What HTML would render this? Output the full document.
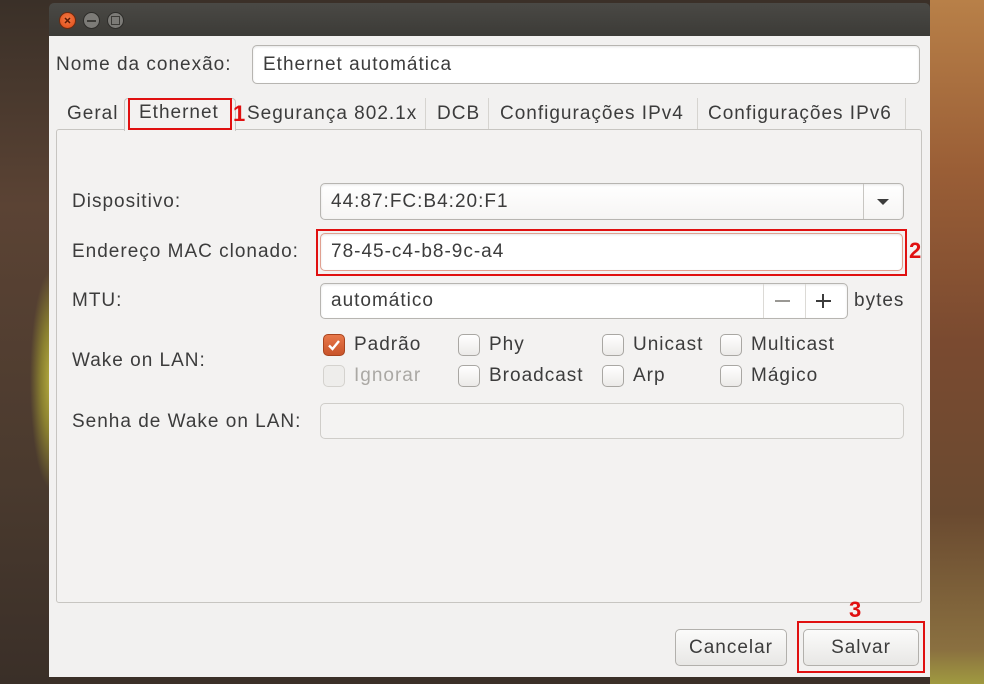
<!DOCTYPE html>
<html><head><meta charset="utf-8"><style>
*{margin:0;padding:0;box-sizing:border-box}
body{width:984px;height:684px;overflow:hidden;position:relative;font-family:"Liberation Sans",sans-serif;font-size:19px;letter-spacing:1px;color:#3c3c3c;
background:#3b3028}
.bgl{position:absolute;left:0;top:0;width:49px;height:684px;background:radial-gradient(ellipse 22px 110px at 52px 380px,#b9b040 0,#8a8030 50%,rgba(0,0,0,0) 100%),linear-gradient(180deg,#3a3028,#5b4334 30%,#4a3a2e 70%,#3a2f28)}
.bgr{position:absolute;left:930px;top:0;width:54px;height:684px;background:radial-gradient(ellipse 25px 50px at 984px 470px,#6a6a30,rgba(0,0,0,0)),radial-gradient(ellipse 20px 30px at 950px 115px,#e8c070,rgba(0,0,0,0)),linear-gradient(180deg,#b88048,#9a5e36 25%,#7a4a30 50%,#6a4a30 75%,#8a7040 95%,#a09a40)}
.a{position:absolute;white-space:nowrap}
.title{left:49px;top:3px;width:881px;height:33px;background:linear-gradient(#4a4945,#3c3b37);border-radius:5px 5px 0 0}
.wb{position:absolute;top:9px;width:17px;height:17px;border-radius:50%;background:#7c7b77;border:1px solid #2e2d2a}
.win{left:49px;top:36px;width:881px;height:641px;background:#f2f1f0}
.entry{position:absolute;background:#fff;border:1px solid #b7b5b1;border-radius:5px;box-shadow:inset 0 1px 2px rgba(0,0,0,.1)}
.t{font-size:19px;line-height:22px}
.red{position:absolute;border:2px solid #e01010}
.num{position:absolute;color:#e01010;font-weight:bold;font-size:22px;letter-spacing:0}
.cb{position:absolute;width:22px;height:22px;border:1px solid #a9a7a3;border-radius:5px;background:linear-gradient(#fff,#eceae8)}
.sep{position:absolute;top:98px;width:1px;height:31px;background:#d6d4d0}
.btn{position:absolute;border:1px solid #b2b0ac;border-radius:5px;background:linear-gradient(#fbfbfa,#e8e7e5);text-align:center;line-height:35px}
</style></head><body>
<div class="bgl"></div><div class="bgr"></div>
<div class="a title">
 <div class="wb" style="left:10px;background:radial-gradient(circle at 50% 40%,#f37a45,#df4a16);border-color:#6a2a10"></div>
 <svg style="position:absolute;left:14px;top:13px" width="9" height="9"><path d="M2 2L7 7M7 2L2 7" stroke="#5a1a05" stroke-width="1.5"/></svg>
 <div class="wb" style="left:34px"></div><div class="wb" style="left:58px"></div>
 <div style="position:absolute;left:38px;top:17px;width:9px;height:2px;background:#3c3b37"></div>
 <div style="position:absolute;left:62px;top:13px;width:9px;height:9px;border:1.5px solid #3c3b37"></div>
</div>
<div class="a win"></div>
<div class="a t" style="left:56px;top:54px">Nome da conexão:</div>
<div class="entry" style="left:252px;top:45px;width:668px;height:39px"></div>
<div class="a t" style="left:263px;top:54px">Ethernet automática</div>

<div class="a" style="left:56px;top:129px;width:866px;height:474px;border:1px solid #c7c5c1;border-radius:3px;background:#f3f2f1"></div>
<div class="a" style="left:124px;top:98px;width:112px;height:33px;background:#f3f2f1;border:1px solid #c7c5c1;border-bottom:none;border-radius:4px 4px 0 0"></div>
<div class="a t" style="left:67px;top:103px">Geral</div>
<div class="a t" style="left:139px;top:102px">Ethernet</div>
<div class="red" style="left:128px;top:98px;width:104px;height:32px"></div>
<div class="num" style="left:233px;top:101px">1</div>
<div class="a t" style="left:247px;top:103px">Segurança 802.1x</div>
<div class="sep" style="left:425px"></div>
<div class="a t" style="left:437px;top:103px">DCB</div>
<div class="sep" style="left:488px"></div>
<div class="a t" style="left:500px;top:103px">Configurações IPv4</div>
<div class="sep" style="left:697px"></div>
<div class="a t" style="left:708px;top:103px">Configurações IPv6</div>
<div class="sep" style="left:905px"></div>

<div class="a t" style="left:72px;top:191px">Dispositivo:</div>
<div class="a t" style="left:72px;top:241px">Endereço MAC clonado:</div>
<div class="a t" style="left:72px;top:290px">MTU:</div>
<div class="a t" style="left:72px;top:350px">Wake on LAN:</div>
<div class="a t" style="left:72px;top:411px">Senha de Wake on LAN:</div>

<div class="entry" style="left:320px;top:183px;width:584px;height:37px;background:linear-gradient(#fff,#f6f5f4)"></div>
<div class="a" style="left:863px;top:184px;width:1px;height:35px;background:#c8c6c2"></div>
<div class="a" style="left:877px;top:199px;width:0;height:0;border-left:6px solid transparent;border-right:6px solid transparent;border-top:6px solid #3c3c3c"></div>
<div class="a t" style="left:331px;top:191px">44:87:FC:B4:20:F1</div>

<div class="entry" style="left:320px;top:233px;width:583px;height:38px;border-color:#e0a090"></div>
<div class="red" style="left:316px;top:229px;width:591px;height:47px"></div>
<div class="num" style="left:909px;top:238px">2</div>
<div class="a t" style="left:331px;top:241px">78-45-c4-b8-9c-a4</div>

<div class="entry" style="left:320px;top:283px;width:528px;height:36px"></div>
<div class="a" style="left:763px;top:284px;width:1px;height:34px;background:#dcdad6"></div>
<div class="a" style="left:805px;top:284px;width:1px;height:34px;background:#dcdad6"></div>
<div class="a" style="left:775px;top:300px;width:15px;height:2px;background:#9a9894"></div>
<div class="a" style="left:816px;top:300px;width:15px;height:2px;background:#3c3c3c"></div>
<div class="a" style="left:822px;top:294px;width:2px;height:14px;background:#3c3c3c"></div>
<div class="a t" style="left:331px;top:290px">automático</div>
<div class="a t" style="left:854px;top:290px">bytes</div>

<div class="cb" style="left:323px;top:334px;background:linear-gradient(#e8784a,#c9542a);border-color:#a8441e"></div>
<svg class="a" style="left:326px;top:337px" width="16" height="16"><path d="M3 8.5 L6.5 12 L13 4" stroke="#fff" stroke-width="2.4" fill="none"/></svg>
<div class="a t" style="left:354px;top:334px">Padrão</div>
<div class="cb" style="left:458px;top:334px"></div><div class="a t" style="left:489px;top:334px">Phy</div>
<div class="cb" style="left:602px;top:334px"></div><div class="a t" style="left:633px;top:334px">Unicast</div>
<div class="cb" style="left:720px;top:334px"></div><div class="a t" style="left:751px;top:334px">Multicast</div>
<div class="cb" style="left:323px;top:365px;border-color:#d4d2ce;background:#eeedeb"></div><div class="a t" style="left:354px;top:365px;color:#aaa8a4">Ignorar</div>
<div class="cb" style="left:458px;top:365px"></div><div class="a t" style="left:489px;top:365px">Broadcast</div>
<div class="cb" style="left:602px;top:365px"></div><div class="a t" style="left:633px;top:365px">Arp</div>
<div class="cb" style="left:720px;top:365px"></div><div class="a t" style="left:751px;top:365px">Mágico</div>

<div class="entry" style="left:320px;top:403px;width:584px;height:36px;background:#f4f3f2;border-color:#cfcdc9;box-shadow:none"></div>

<div class="btn" style="left:675px;top:629px;width:112px;height:37px">Cancelar</div>
<div class="btn" style="left:803px;top:629px;width:116px;height:37px">Salvar</div>
<div class="red" style="left:797px;top:621px;width:128px;height:52px"></div>
<div class="num" style="left:849px;top:597px">3</div>
</body></html>
